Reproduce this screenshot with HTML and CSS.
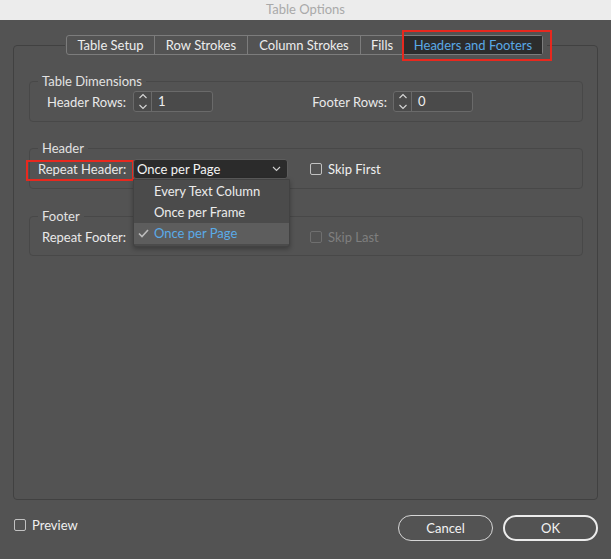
FILE: index.html
```html
<!DOCTYPE html>
<html>
<head>
<meta charset="utf-8">
<link rel="stylesheet" href="styles.css">
</head>
<body>
<div class="titlebar">Table Options</div>
<fieldset class="panel">
  <legend class="tabs">
    <div class="tabbar">
      <span class="tab t1">Table Setup</span>
      <span class="tab t2">Row Strokes</span>
      <span class="tab t3">Column Strokes</span>
      <span class="tab t4">Fills</span>
      <span class="tab t5 active">Headers and Footers</span>
    </div>
  </legend>

  <fieldset class="group g1">
    <legend>Table Dimensions</legend>
    <div class="row">
      <span class="lbl">Header Rows:</span>
      <div class="spin">
        <span class="arrows"><svg width="10" height="17" viewBox="0 0 10 17"><polyline points="1.5,5 5,1.5 8.5,5" fill="none" stroke="#d8d8d8" stroke-width="1.1"/><polyline points="1.5,12 5,15.5 8.5,12" fill="none" stroke="#d8d8d8" stroke-width="1.1"/></svg></span>
        <span class="val">1</span>
      </div>
      <span class="lbl lbl2">Footer Rows:</span>
      <div class="spin">
        <span class="arrows"><svg width="10" height="17" viewBox="0 0 10 17"><polyline points="1.5,5 5,1.5 8.5,5" fill="none" stroke="#d8d8d8" stroke-width="1.1"/><polyline points="1.5,12 5,15.5 8.5,12" fill="none" stroke="#d8d8d8" stroke-width="1.1"/></svg></span>
        <span class="val">0</span>
      </div>
    </div>
  </fieldset>

  <fieldset class="group g2">
    <legend>Header</legend>
    <div class="row">
      <span class="lbl marked">Repeat Header:</span>
      <div class="select">
        <span>Once per Page</span>
        <svg class="chev" width="9" height="6" viewBox="0 0 9 6"><polyline points="1,1 4.5,4.5 8,1" fill="none" stroke="#d0d0d0" stroke-width="1.1"/></svg>
        <div class="menu">
          <div class="item">Every Text Column</div>
          <div class="item">Once per Frame</div>
          <div class="item sel"><svg class="check" width="11" height="9" viewBox="0 0 11 9"><polyline points="1,4.5 4,7.5 10,1" fill="none" stroke="#bdbdbd" stroke-width="1.6"/></svg>Once per Page</div>
        </div>
      </div>
      <span class="cb"></span>
      <span class="cbl">Skip First</span>
    </div>
  </fieldset>

  <fieldset class="group g3">
    <legend>Footer</legend>
    <div class="row">
      <span class="lbl">Repeat Footer:</span>
      <div class="select under"></div>
      <span class="cb disabled"></span>
      <span class="cbl disabled">Skip Last</span>
    </div>
  </fieldset>
</fieldset>

<div class="footer">
  <div class="preview">
    <span class="cb first"></span>
    <span class="cbl">Preview</span>
  </div>
  <div class="buttons">
    <span class="btn">Cancel</span>
    <span class="btn ok">OK</span>
  </div>
</div>
</body>
</html>
```

FILE: styles.css
```css
html, body {
  margin: 0;
  padding: 0;
}

body {
  width: 611px;
  height: 559px;
  overflow: hidden;
  background: #535353;
  font-family: Lato, "Open Sans", sans-serif;
  font-size: 13px;
  color: #e9e9e9;
  display: flex;
  flex-direction: column;
}

.titlebar {
  flex: none;
  height: 20px;
  line-height: 19px;
  background: #ececec;
  color: #a9a9a9;
  text-align: center;
}

.panel {
  flex: 1;
  min-width: 0;
  margin: 15px 13px 0 13px;
  padding: 18px 14px 0 15px;
  border: 1px solid #414141;
  border-radius: 4px;
}

.tabs {
  margin: 0 auto;
  padding: 0 4px 0 1px;
}

.tabbar {
  display: flex;
  width: 477px;
  height: 20px;
  box-sizing: border-box;
  border: 1px solid #7c7c7c;
  border-radius: 3px;
}

.tab {
  box-sizing: border-box;
  line-height: 18px;
  padding: 0;
  text-align: center;
  color: #ededed;
  white-space: nowrap;
}

.tab + .tab {
  border-left: 1px solid #7c7c7c;
}

.t1 { width: 87px; }
.t2 { width: 93px; }
.t3 { width: 113px; }
.t4 { width: 43px; }
.t5 { width: 139px; }

.tab.active {
  position: relative;
  background: #2c2c2c;
  color: #5aa9e6;
}

.tab.active::after {
  content: "";
  position: absolute;
  top: -6px;
  bottom: -7px;
  left: -2px;
  right: -10px;
  border: 2px solid #e8281e;
}

.group {
  margin: 0;
  padding: 2px 8px 9px 8px;
  border: 1px solid #484848;
  border-radius: 4px;
  min-width: 0;
}

.group legend {
  padding: 0 4px;
  line-height: 16px;
  color: #e2e2e2;
}

.g1 { margin-bottom: 18px; }
.g2 { margin-bottom: 19px; padding-bottom: 9px; }
.g3 { padding-bottom: 8px; }

.row {
  display: flex;
  align-items: center;
  height: 21px;
}

.lbl {
  flex: none;
  width: 88px;
  text-align: right;
  margin-right: 7px;
  white-space: nowrap;
}

.lbl2 {
  width: 174px;
  margin-right: 6px;
}

.marked {
  position: relative;
}

.marked::after {
  content: "";
  position: absolute;
  top: -1px;
  bottom: -4px;
  left: -12px;
  right: -8px;
  border: 2px solid #e8281e;
}

.spin {
  flex: none;
  display: flex;
  width: 80px;
  height: 21px;
  box-sizing: border-box;
  border: 1px solid #6a6a6a;
  border-radius: 3px;
  background: #4a4a4a;
}

.arrows {
  width: 17px;
  border-right: 1px solid #6a6a6a;
  display: flex;
  align-items: center;
  justify-content: center;
}

.val {
  padding-left: 6px;
  line-height: 19px;
  color: #efefef;
}

.select {
  flex: none;
  position: relative;
  display: flex;
  align-items: center;
  width: 155px;
  height: 20px;
  box-sizing: border-box;
  padding-left: 3px;
  background: #2b2b2b;
  border: 1px solid #5c5c5c;
  border-radius: 3px;
  color: #f3f3f3;
}

.chev {
  margin-left: auto;
  margin-right: 6px;
}

.menu {
  position: absolute;
  top: 19px;
  left: -1px;
  width: 157px;
  box-sizing: border-box;
  padding: 1px 0 2px 0;
  background: #4b4b4b;
  border: 1px solid #424242;
  border-radius: 0 0 3px 3px;
  box-shadow: 0 2px 5px rgba(0, 0, 0, 0.3);
  z-index: 5;
}

.item {
  position: relative;
  height: 21px;
  line-height: 21px;
  padding-left: 20px;
  color: #ececec;
}

.item.sel {
  background: #5d5d5d;
  color: #5aabe8;
}

.check {
  position: absolute;
  left: 4px;
  top: 6px;
}

.cb {
  flex: none;
  width: 12px;
  height: 12px;
  box-sizing: border-box;
  border: 1px solid #c2c2c2;
  border-radius: 2px;
  margin: 0 6px 0 22px;
}

.cb.first {
  margin-left: 0;
}

.cbl {
  color: #f0f0f0;
  white-space: nowrap;
}

.cb.disabled {
  border-color: #6f6f6f;
}

.cbl.disabled {
  color: #7f7f7f;
}

.footer {
  flex: none;
  height: 59px;
  box-sizing: border-box;
  padding: 15px 13px 0 14px;
  display: flex;
  align-items: flex-start;
}

.preview {
  display: flex;
  align-items: center;
  margin-top: 4px;
  height: 12px;
}

.buttons {
  margin-left: auto;
  display: flex;
  gap: 10px;
}

.btn {
  width: 95px;
  height: 26px;
  box-sizing: border-box;
  border: 1px solid #d6d6d6;
  border-radius: 13px;
  display: flex;
  align-items: center;
  justify-content: center;
  color: #f2f2f2;
}

.btn.ok {
  border: 2px solid #ececec;
}
```
